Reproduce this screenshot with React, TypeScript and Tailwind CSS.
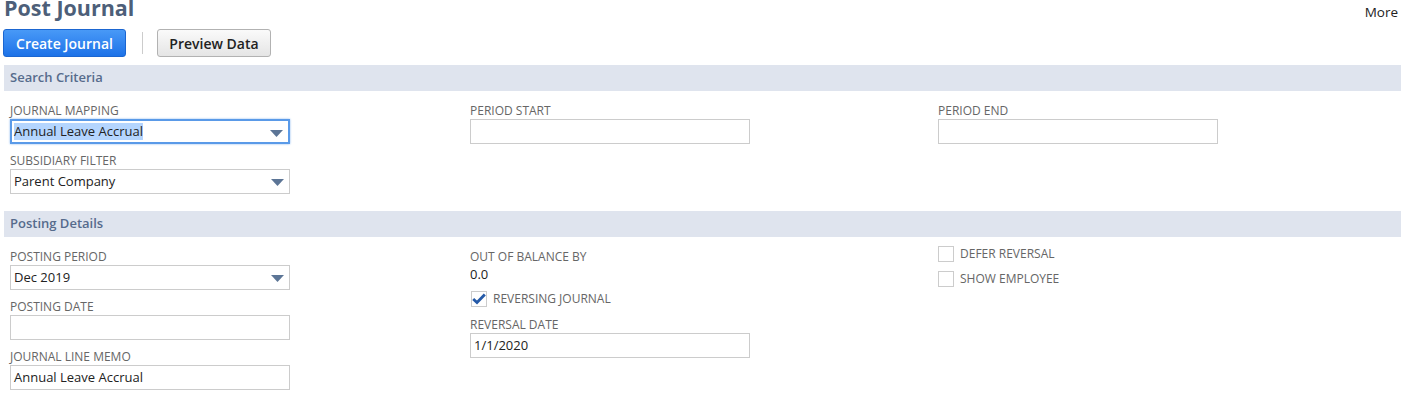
import React from "react"

const font = { fontFamily: '"Open Sans", "Liberation Sans", sans-serif' }

function Label({ children }: { children: React.ReactNode }) {
  return <div className="text-[12px] leading-[16px] text-[#666666] uppercase">{children}</div>
}

function Arrow() {
  return (
    <svg width="13" height="7" viewBox="0 0 13 7" className="absolute right-[5px] top-[9px]">
      <path d="M0 0 H13 L6.5 7 Z" fill="#5c7596" />
    </svg>
  )
}

function SelectBox({ value, focused, highlight }: { value: string; focused?: boolean; highlight?: boolean }) {
  return (
    <div
      className={
        focused
          ? "relative w-[280px] h-[25px] border-2 border-[#5a9ae8] shadow-[0_0_2px_#8ab8f0] bg-white flex items-center pl-[2px]"
          : "relative w-[280px] h-[25px] border border-[#cccccc] bg-white flex items-center pl-[3px]"
      }
    >
      <span className={highlight ? "text-[13px] text-[#222] bg-[#b4d5fe] leading-[17px]" : "text-[13px] text-[#222] leading-[17px]"}>
        {value}
      </span>
      <Arrow />
    </div>
  )
}

function TextBox({ value }: { value?: string }) {
  return (
    <div className="w-[280px] h-[25px] border border-[#cccccc] bg-white flex items-center pl-[3px] text-[13px] text-[#222]">
      {value}
    </div>
  )
}

function Check({ checked, label }: { checked?: boolean; label: string }) {
  return (
    <div className="flex items-center gap-[6px] h-[18px]">
      <div className="w-[16px] h-[16px] border border-[#cccccc] bg-white flex items-center justify-center">
        {checked && (
          <svg width="14" height="12" viewBox="0 0 14 12">
            <path d="M1.2 6 L5 9.6 L12.8 1.6" stroke="#255aa8" strokeWidth="2.8" fill="none" />
          </svg>
        )}
      </div>
      <span className="text-[12px] text-[#666666] uppercase">{label}</span>
    </div>
  )
}

function SectionBar({ title }: { title: string }) {
  return (
    <div className="ml-[4px] h-[26px] bg-[#dfe4ee] flex items-center pl-[6px]">
      <span className="text-[13px] font-semibold text-[#566b8c]">{title}</span>
    </div>
  )
}

export default function App() {
  return (
    <div className="w-[1401px] h-[401px] bg-white overflow-hidden relative" style={font}>
      <div className="flex items-start justify-between">
        <h1 className="ml-[4px] -mt-[7px] text-[21.5px] leading-[30px] font-bold text-[#4d5f79]">Post Journal</h1>
        <span className="mr-[3px] mt-[2px] text-[13.5px] text-[#222]">More</span>
      </div>
      <div className="flex items-center ml-[3px] mt-[6px] h-[28px]">
        <button className="h-[28px] w-[123px] rounded-[3px] border border-[#1b66d1] bg-gradient-to-b from-[#4899f7] to-[#1c72e8] text-white text-[14px] font-semibold">
          Create Journal
        </button>
        <div className="ml-[16px] w-px h-[22px] bg-[#cccccc]" />
        <button className="ml-[14px] h-[28px] w-[114px] rounded-[3px] border border-[#b2b2b2] bg-gradient-to-b from-[#fafafa] to-[#e5e5e5] text-[#222] text-[14px] font-semibold">
          Preview Data
        </button>
      </div>
      <div className="mt-[8px]">
        <SectionBar title="Search Criteria" />
      </div>
      <div className="flex ml-[10px] mt-[12px]">
        <div className="w-[460px] flex flex-col">
          <Label>Journal Mapping</Label>
          <SelectBox value="Annual Leave Accrual" focused highlight />
          <div className="mt-[9px]">
            <Label>Subsidiary Filter</Label>
          </div>
          <SelectBox value="Parent Company" />
        </div>
        <div className="w-[468px] flex flex-col">
          <Label>Period Start</Label>
          <TextBox />
        </div>
        <div className="flex flex-col">
          <Label>Period End</Label>
          <TextBox />
        </div>
      </div>
      <div className="mt-[17px]">
        <SectionBar title="Posting Details" />
      </div>
      <div className="flex ml-[10px]">
        <div className="w-[460px] flex flex-col mt-[12px]">
          <Label>Posting Period</Label>
          <SelectBox value="Dec 2019" />
          <div className="mt-[9px]">
            <Label>Posting Date</Label>
          </div>
          <TextBox />
          <div className="mt-[9px]">
            <Label>Journal Line Memo</Label>
          </div>
          <TextBox value="Annual Leave Accrual" />
        </div>
        <div className="w-[468px] flex flex-col mt-[12px]">
          <Label>Out of Balance By</Label>
          <div className="text-[13px] text-[#222] leading-[18px]">0.0</div>
          <div className="mt-[7px] ml-[1px]">
            <Check checked label="Reversing Journal" />
          </div>
          <div className="mt-[9px]">
            <Label>Reversal Date</Label>
          </div>
          <TextBox value="1/1/2020" />
        </div>
        <div className="flex flex-col gap-[7px] mt-[8px]">
          <Check label="Defer Reversal" />
          <Check label="Show Employee" />
        </div>
      </div>
    </div>
  )
}
